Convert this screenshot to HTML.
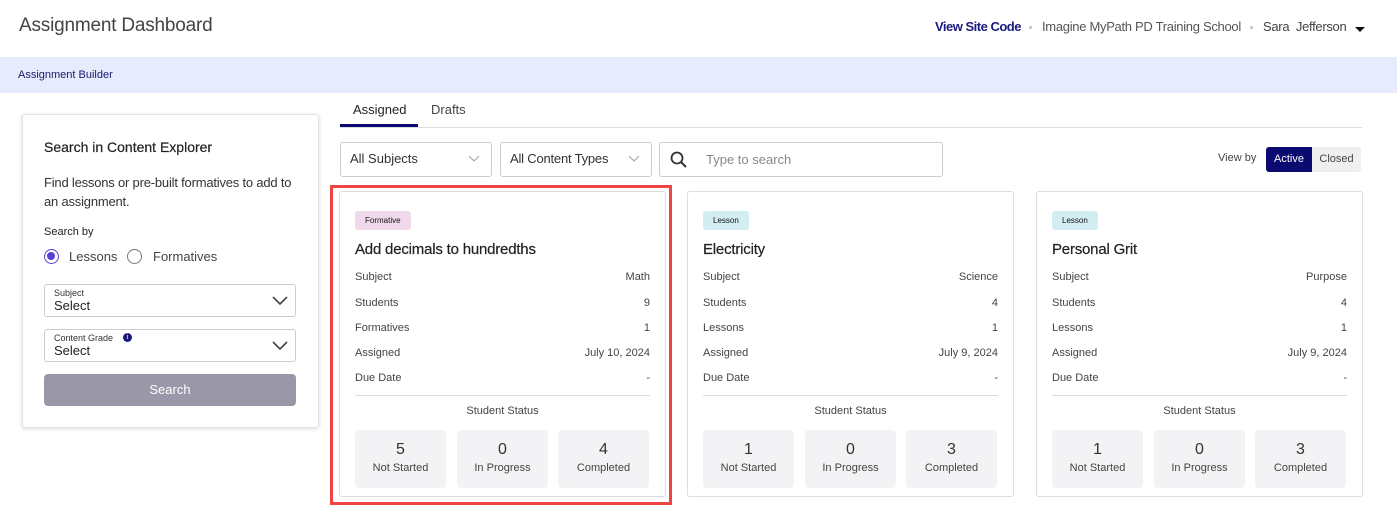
<!DOCTYPE html>
<html><head><style>
*{box-sizing:border-box;margin:0;padding:0}
body{width:1397px;height:513px;background:#fff;font-family:"Liberation Sans",Arial,sans-serif;color:#333;position:relative;overflow:hidden}
.a{position:absolute}
.card{position:absolute;top:191px;width:327px;height:306px;border:1px solid #ddd;border-radius:3px;background:#fff}
.badge{position:absolute;left:15px;top:19px;height:19px;padding:0 10px;border-radius:3px;font-size:8px;line-height:19px;color:#111}
.title{position:absolute;left:15px;top:49px;font-size:15px;color:#222;letter-spacing:-0.2px;-webkit-text-stroke:0.2px #222}
.row{position:absolute;left:15px;right:15px;font-size:11px;color:#444;display:flex;justify-content:space-between}
.hr{position:absolute;left:15px;right:15px;top:203px;border-top:1px solid #ddd}
.ss{position:absolute;left:0;right:0;top:213px;text-align:center;font-size:11px;color:#444}
.box{position:absolute;top:238px;width:91px;height:58px;background:#f3f3f5;border-radius:4px;text-align:center}
.box b{display:block;font-weight:normal;font-size:16px;color:#333;margin-top:11px}
.box span{display:block;font-size:11px;color:#444;margin-top:3px}
.sel{position:absolute;border:1px solid #ccc;border-radius:3px;background:#fff}
.h{font-size:13px;letter-spacing:-0.3px;top:19px}
</style></head><body>
<div class="a" style="left:19px;top:15px;font-size:19px;color:#444;letter-spacing:-0.2px">Assignment Dashboard</div>
<div class="a h" style="left:935px;color:#1a1a80;font-weight:bold;letter-spacing:-0.5px">View Site Code</div>
<div class="a" style="left:1029px;top:26px;width:3px;height:3px;background:#ccc"></div>
<div class="a h" style="left:1042px;color:#555">Imagine MyPath PD Training School</div>
<div class="a" style="left:1250px;top:26px;width:3px;height:3px;background:#ccc"></div>
<div class="a h" style="left:1263px;color:#444">Sara&nbsp; Jefferson</div>
<div class="a" style="left:1355px;top:27px;border-left:5px solid transparent;border-right:5px solid transparent;border-top:5px solid #111"></div>
<div class="a" style="left:0;top:57px;width:1397px;height:36px;background:#e6ecfb"></div>
<div class="a" style="left:18px;top:69px;font-size:11px;color:#1a1a70">Assignment Builder</div>

<div class="a" style="left:22px;top:114px;width:297px;height:314px;background:#fff;border:1px solid #e3e3e3;border-radius:3px;box-shadow:0 1px 4px rgba(0,0,0,.15)"></div>
<div class="a" style="left:44px;top:139px;font-size:14px;color:#222;-webkit-text-stroke:0.2px #222">Search in Content Explorer</div>
<div class="a" style="left:44px;top:173px;font-size:13px;color:#333;line-height:19px;width:258px;letter-spacing:-0.2px">Find lessons or pre-built formatives to add to an assignment.</div>
<div class="a" style="left:44px;top:226px;font-size:11px;color:#222">Search by</div>
<div class="a" style="left:44px;top:249px;width:15px;height:15px;border:1.5px solid #5a3fd0;border-radius:50%"><div style="margin:2px;width:8px;height:8px;border-radius:50%;background:#5a3fd0"></div></div>
<div class="a" style="left:69px;top:249px;font-size:13px;color:#444">Lessons</div>
<div class="a" style="left:127px;top:249px;width:15px;height:15px;border:1px solid #777;border-radius:50%"></div>
<div class="a" style="left:153px;top:249px;font-size:13px;color:#444">Formatives</div>
<div class="sel" style="left:44px;top:284px;width:252px;height:33px"></div>
<div class="a" style="left:54px;top:288px;font-size:9px;color:#333">Subject</div>
<div class="a" style="left:54px;top:298px;font-size:13px;color:#222">Select</div>
<svg class="a" style="left:272px;top:296px" width="16" height="10"><path d="M1 1l7 7 7-7" fill="none" stroke="#444" stroke-width="1.6"/></svg>
<div class="sel" style="left:44px;top:329px;width:252px;height:33px"></div>
<div class="a" style="left:54px;top:333px;font-size:9px;color:#333">Content Grade</div>
<div class="a" style="left:123px;top:333px;width:9px;height:9px;border-radius:50%;background:#1a1a80;color:#fff;font-size:7px;text-align:center;line-height:9px">i</div>
<div class="a" style="left:54px;top:343px;font-size:13px;color:#222">Select</div>
<svg class="a" style="left:272px;top:341px" width="16" height="10"><path d="M1 1l7 7 7-7" fill="none" stroke="#444" stroke-width="1.6"/></svg>
<div class="a" style="left:44px;top:374px;width:252px;height:32px;background:#9a98a8;border-radius:4px;color:#fff;font-size:13px;text-align:center;line-height:32px">Search</div>

<div class="a" style="left:353px;top:102px;font-size:13px;color:#222">Assigned</div>
<div class="a" style="left:431px;top:102px;font-size:13px;color:#444">Drafts</div>
<div class="a" style="left:340px;top:127px;width:1022px;border-top:1px solid #ddd"></div>
<div class="a" style="left:340px;top:124px;width:78px;height:3px;background:#0a0a70"></div>

<div class="sel" style="left:340px;top:142px;width:152px;height:35px"></div>
<div class="a" style="left:350px;top:151px;font-size:13px;color:#333">All Subjects</div>
<svg class="a" style="left:468px;top:155px" width="12" height="8"><path d="M1 1l5 5 5-5" fill="none" stroke="#aaa" stroke-width="1.2"/></svg>
<div class="sel" style="left:500px;top:142px;width:152px;height:35px"></div>
<div class="a" style="left:510px;top:151px;font-size:13px;color:#333;letter-spacing:-0.2px">All Content Types</div>
<svg class="a" style="left:628px;top:155px" width="12" height="8"><path d="M1 1l5 5 5-5" fill="none" stroke="#aaa" stroke-width="1.2"/></svg>
<div class="sel" style="left:659px;top:142px;width:284px;height:35px"></div>
<svg class="a" style="left:670px;top:151px" width="17" height="17"><circle cx="7" cy="7" r="5.5" fill="none" stroke="#333" stroke-width="1.8"/><path d="M11 11l5 5" stroke="#333" stroke-width="2"/></svg>
<div class="a" style="left:706px;top:152px;font-size:13px;color:#888">Type to search</div>
<div class="a" style="left:1218px;top:152px;font-size:11px;color:#444">View by</div>
<div class="a" style="left:1266px;top:147px;width:46px;height:25px;background:#0a0a70;border-radius:3px 0 0 3px;color:#fff;font-size:11px;text-align:center;line-height:25px">Active</div>
<div class="a" style="left:1312px;top:147px;width:49px;height:25px;background:#efefef;border-radius:0 3px 3px 0;color:#444;font-size:11px;text-align:center;line-height:25px">Closed</div>

<div class="a" style="left:330px;top:185px;width:342px;height:320px;border:3px solid #ef4444"></div>

<div class="card" style="left:339px">
<div class="badge" style="background:#f1d9ec">Formative</div>
<div class="title">Add decimals to hundredths</div>
<div class="row" style="top:79px"><span>Subject</span><span>Math</span></div>
<div class="row" style="top:105px"><span>Students</span><span>9</span></div>
<div class="row" style="top:130px"><span>Formatives</span><span>1</span></div>
<div class="row" style="top:155px"><span>Assigned</span><span>July 10, 2024</span></div>
<div class="row" style="top:180px"><span>Due Date</span><span>-</span></div>
<div class="hr"></div><div class="ss">Student Status</div>
<div class="box" style="left:15px"><b>5</b><span>Not Started</span></div>
<div class="box" style="left:117px"><b>0</b><span>In Progress</span></div>
<div class="box" style="left:218px"><b>4</b><span>Completed</span></div>
</div>

<div class="card" style="left:687px">
<div class="badge" style="background:#d3eef3">Lesson</div>
<div class="title">Electricity</div>
<div class="row" style="top:79px"><span>Subject</span><span>Science</span></div>
<div class="row" style="top:105px"><span>Students</span><span>4</span></div>
<div class="row" style="top:130px"><span>Lessons</span><span>1</span></div>
<div class="row" style="top:155px"><span>Assigned</span><span>July 9, 2024</span></div>
<div class="row" style="top:180px"><span>Due Date</span><span>-</span></div>
<div class="hr"></div><div class="ss">Student Status</div>
<div class="box" style="left:15px"><b>1</b><span>Not Started</span></div>
<div class="box" style="left:117px"><b>0</b><span>In Progress</span></div>
<div class="box" style="left:218px"><b>3</b><span>Completed</span></div>
</div>

<div class="card" style="left:1036px">
<div class="badge" style="background:#d3eef3">Lesson</div>
<div class="title">Personal Grit</div>
<div class="row" style="top:79px"><span>Subject</span><span>Purpose</span></div>
<div class="row" style="top:105px"><span>Students</span><span>4</span></div>
<div class="row" style="top:130px"><span>Lessons</span><span>1</span></div>
<div class="row" style="top:155px"><span>Assigned</span><span>July 9, 2024</span></div>
<div class="row" style="top:180px"><span>Due Date</span><span>-</span></div>
<div class="hr"></div><div class="ss">Student Status</div>
<div class="box" style="left:15px"><b>1</b><span>Not Started</span></div>
<div class="box" style="left:117px"><b>0</b><span>In Progress</span></div>
<div class="box" style="left:218px"><b>3</b><span>Completed</span></div>
</div>
</body></html>
